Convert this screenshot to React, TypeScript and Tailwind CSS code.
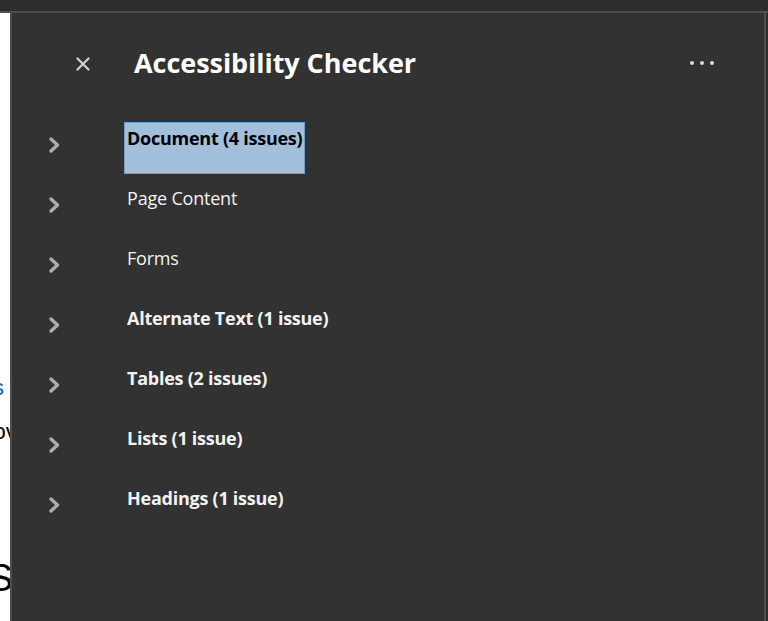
import React from 'react'

const items = [
  { label: 'Document (4 issues)', bold: true, selected: true },
  { label: 'Page Content', bold: false },
  { label: 'Forms', bold: false },
  { label: 'Alternate Text (1 issue)', bold: true },
  { label: 'Tables (2 issues)', bold: true },
  { label: 'Lists (1 issue)', bold: true },
  { label: 'Headings (1 issue)', bold: true },
]

function Chevron() {
  return (
    <svg width="14" height="20" viewBox="0 0 14 20" className="mt-[13px]">
      <path d="M4 4 L10.5 10 L4 16" fill="none" stroke="#acacac" strokeWidth="3.4" strokeLinecap="round" strokeLinejoin="round" />
    </svg>
  )
}

export default function App() {
  return (
    <div className="w-[768px] h-[621px] flex flex-col bg-[#2c2c2c] overflow-hidden" style={{ fontFamily: '"Open Sans", "Noto Sans", sans-serif' }}>
      {/* top chrome */}
      <div className="h-[13px] shrink-0 bg-[#2d2d2d] border-b-2 border-[#4e4e4e]" />

      <div className="flex-1 flex min-h-0">
        {/* document page peeking on the left */}
        <div className="w-[12px] shrink-0 bg-white border-r-2 border-[#4e4e4e] overflow-hidden flex flex-col text-black" style={{ fontFamily: '"Liberation Sans", Arial, sans-serif' }}>
          <div className="mt-[363px] flex justify-end mr-[6px]">
            <span className="whitespace-nowrap text-[22px] leading-[24px] text-[#1a5fb4]">links</span>
          </div>
          <div className="mt-[19px] -ml-[31px] whitespace-nowrap text-[22px] leading-[26px]">above</div>
          <div className="mt-[112px] flex justify-end -mr-[3px]">
            <span className="whitespace-nowrap text-[38px] leading-[42px]">S</span>
          </div>
        </div>

        {/* accessibility panel */}
        <div className="flex-1 bg-[#323232] flex flex-col">
          <div className="h-[100px] flex items-center pl-[64px] pr-[50px]">
            <svg width="14" height="14" viewBox="0 0 14 14" className="mt-[2px]">
              <path d="M1.5 1.5 L12.5 12.5 M12.5 1.5 L1.5 12.5" stroke="#d2d2d2" strokeWidth="2.2" strokeLinecap="round" />
            </svg>
            <h1 className="ml-[44px] text-[27px] leading-[34px] font-bold text-white tracking-[-0.05px]">Accessibility Checker</h1>
            <div className="ml-auto flex gap-[6px]">
              <span className="w-[4px] h-[4px] rounded-full bg-[#dcdcdc]" />
              <span className="w-[4px] h-[4px] rounded-full bg-[#dcdcdc]" />
              <span className="w-[4px] h-[4px] rounded-full bg-[#dcdcdc]" />
            </div>
          </div>

          <div className="pt-[9px] flex flex-col">
            {items.map((it) => (
              <div key={it.label} className="h-[60px] flex items-start">
                <div className="ml-[35px] w-[77px]">
                  <Chevron />
                </div>
                <div
                  className={
                    it.selected
                      ? 'h-[52px] border border-[#6f9ccc] bg-[#a2c0dc] pl-[2px] pr-[2px] pt-[3px] text-black'
                      : 'h-[52px] border border-transparent pl-[2px] pr-[2px] pt-[3px] text-[#f2f2f2]'
                  }
                >
                  <span className={it.bold ? 'block text-[18px] leading-[24px] font-bold tracking-[-0.25px]' : 'block text-[18px] leading-[24px] font-medium tracking-[-0.2px]'}>
                    {it.label}
                  </span>
                </div>
              </div>
            ))}
          </div>
        </div>

        {/* right edge */}
        <div className="w-[4px] shrink-0 border-l-2 border-[#4e4e4e] bg-[#2c2c2c]" />
      </div>
    </div>
  )
}
